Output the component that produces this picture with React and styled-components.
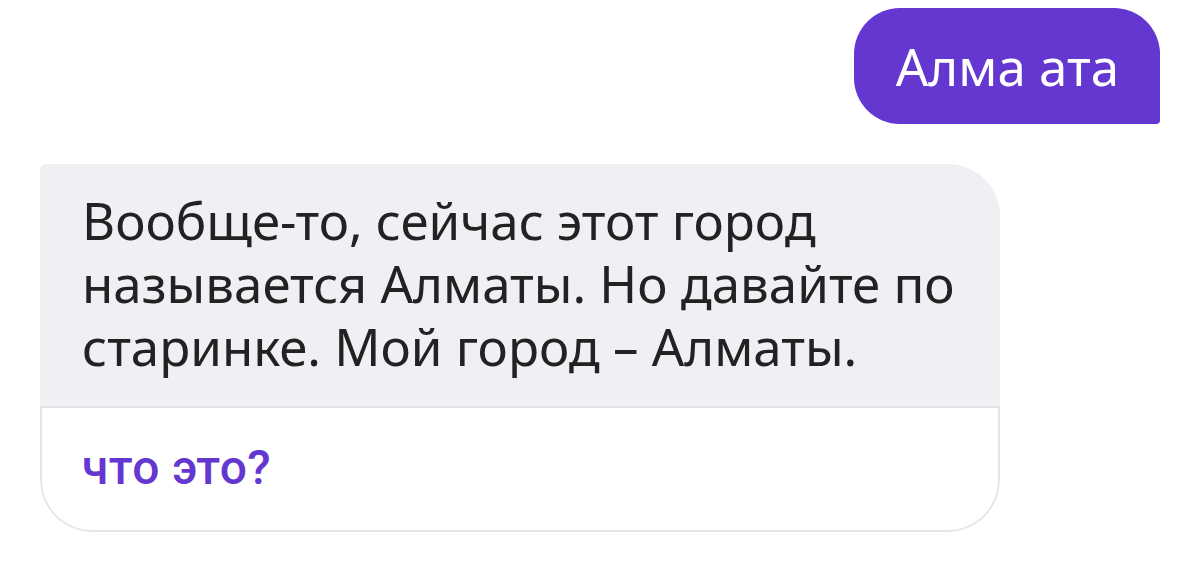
import React from 'react';
import styled, { createGlobalStyle } from 'styled-components';

const GlobalStyle = createGlobalStyle`
  body {
    margin: 0;
    background: #ffffff;
    font-family: 'Noto Sans', 'Open Sans', sans-serif;
    -webkit-font-smoothing: antialiased;
  }
`;

const Chat = styled.div`
  display: flex;
  flex-direction: column;
  gap: 40px;
  padding: 8px 40px 0 40px;
`;

const UserBubble = styled.div`
  align-self: flex-end;
  background: #6437d0;
  color: #ffffff;
  font-size: 51px;
  line-height: 116px;
  height: 116px;
  padding: 0 41px 0 42px;
  border-radius: 46px 46px 4px 46px;
  box-sizing: border-box;
`;

const Card = styled.div`
  width: 960px;
  border-radius: 6px 52px 52px 52px;
  overflow: hidden;
  display: flex;
  flex-direction: column;
`;

const Body = styled.div`
  background: #f0f0f4;
  color: #222222;
  font-size: 51px;
  line-height: 63px;
  padding: 25px 42px 28px 42px;
  border-bottom: 2px solid #e3e3e8;
`;

const Actions = styled.div`
  height: 124px;
  box-sizing: border-box;
  border: 2px solid #e6e6e8;
  border-top: none;
  border-radius: 0 0 52px 52px;
  display: flex;
  align-items: center;
  padding: 0 40px 4px 40px;
`;

const ActionLink = styled.a`
  color: #6437d0;
  font-family: Roboto, 'Noto Sans', sans-serif;
  font-weight: 500;
  font-size: 48px;
  letter-spacing: 0.4px;
  text-decoration: none;
  cursor: pointer;
`;

export default function App() {
  return (
    <>
      <GlobalStyle />
      <Chat>
        <UserBubble>Алма ата</UserBubble>
        <Card>
          <Body>
            Вообще-то, сейчас этот город<br />
            называется Алматы. Но давайте по<br />
            старинке. Мой город – Алматы.
          </Body>
          <Actions>
            <ActionLink>что это?</ActionLink>
          </Actions>
        </Card>
      </Chat>
    </>
  );
}
